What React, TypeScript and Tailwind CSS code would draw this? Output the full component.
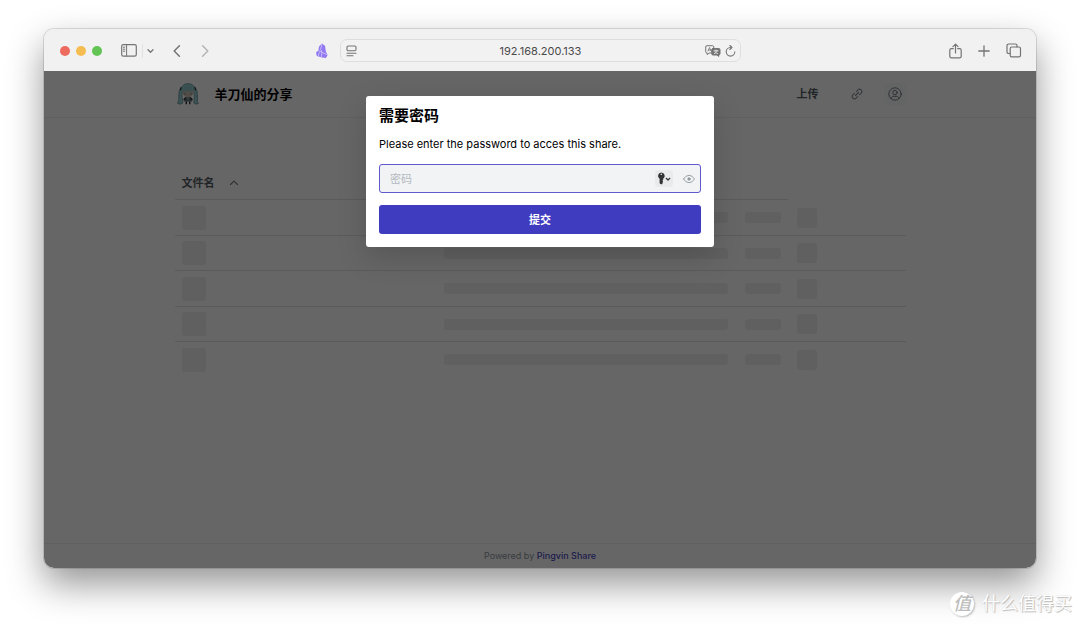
import type { ReactNode } from "react";

function Icon({
  className,
  box,
  width = 1.2,
  children,
}: {
  className: string;
  box: string;
  width?: number;
  children: ReactNode;
}) {
  return (
    <svg
      className={"shrink-0 " + className}
      viewBox={box}
      fill="none"
      stroke="currentColor"
      strokeWidth={width}
      strokeLinecap="round"
      strokeLinejoin="round"
      aria-hidden="true"
    >
      {children}
    </svg>
  );
}

function Toolbar() {
  return (
    <div className="grid h-[42px] shrink-0 grid-cols-[1fr_minmax(0,401px)_1fr] items-center bg-[#f1f1f1] pt-px text-[#747474]">
      <div className="flex items-center pl-4">
        <div className="flex gap-1.5">
          <span className="size-2.5 rounded-full bg-[#ed6a5e]" />
          <span className="size-2.5 rounded-full bg-[#f5bd4f]" />
          <span className="size-2.5 rounded-full bg-[#61c454]" />
        </div>
        <button type="button" aria-label="Sidebar" className="ml-[19px]">
          <Icon className="h-[13px] w-4" box="0 0 16 13">
            <rect x="0.7" y="0.7" width="14.6" height="11.4" rx="1.6" />
            <path d="M5.6 .7v11.4M2.4 3.2h1.4M2.4 5.2h1.4M2.4 7.2h1.4" strokeWidth="1" />
          </Icon>
        </button>
        <span className="ml-[5px] h-3.5 w-px bg-[#e2e2e2]" />
        <button type="button" aria-label="Tab groups" className="ml-1">
          <Icon className="h-2 w-[7px]" box="0 0 7 8" width={1.3}>
            <path d="M1 2.800l2.500 2.500L6 2.800" />
          </Icon>
        </button>
        <button type="button" aria-label="Back" className="ml-[19px]">
          <Icon className="h-3 w-2" box="0 0 8 12" width={1.5}>
            <path d="M6.400 .8L1.200 6l5.200 5.200" />
          </Icon>
        </button>
        <button type="button" aria-label="Forward" className="ml-5 text-[#b4b4b4]">
          <Icon className="h-3 w-2" box="0 0 8 12" width={1.5}>
            <path d="M1.600 .8L6.800 6l-5.200 5.200" />
          </Icon>
        </button>
        <button type="button" aria-label="Web clipper" className="mr-3 ml-auto">
          <svg className="h-4 w-3" viewBox="0 0 12 16" aria-hidden="true">
            <path d="M5.900.5 9 2.700l.9 5.800L11.600 12 10 15l-4-.6L.8 13 0 9.600 2.400 7.400 3 3.400z" fill="#937af2" />
            <path d="M5.900.7 4.700 6.500 6 9.400 5.300 14.400M2.400 7.600 6 9.400l5.300 2.300M2.200 13.300 3.400 9.200" fill="none" stroke="#d3c8fb" strokeWidth=".8" />
          </svg>
        </button>
      </div>
      <div className="flex h-[23px] items-center rounded-[7px] border border-[#dedede] bg-[#f2f2f2] pr-1 pl-[5px]">
        <Icon className="h-3 w-[11px]" box="0 0 11 12" width={1.1}>
          <rect x="1" y="1" width="9" height="4.8" rx="1.2" />
          <path d="M1 8.200h9M1 10.800h6" />
        </Icon>
        <span className="flex-1 pl-5 text-center text-[11px] leading-4 text-[#4a4a4a]">192.168.200.133</span>
        <button type="button" aria-label="Translate">
          <Icon className="h-3 w-4" box="0 0 16 12" width={1}>
            <path d="M6.300 8H4L2.200 9.600V8H2A1.300 1.300 0 0 1 .7 6.700V2A1.300 1.300 0 0 1 2 .7h5.500A1.300 1.300 0 0 1 8.800 2v1" />
            <path d="M3 6l1.500-3.500L6 6M3.500 5h2" strokeWidth=".8" />
            <path d="M8 3.500h5.700A1.300 1.300 0 0 1 15 4.800v3.900A1.300 1.300 0 0 1 13.700 10v1.500L12 10H8a1.300 1.300 0 0 1-1.300-1.300V4.800A1.300 1.300 0 0 1 8 3.500z" fill="currentColor" />
            <path d="M9 5.800h4M11 4.900v.9M9.300 8.600c1.600-.5 2.400-1.500 2.700-2.800M9.900 6.600c.6 1 1.500 1.600 2.700 2" stroke="#f1f1f1" strokeWidth=".8" />
          </Icon>
        </button>
        <button type="button" aria-label="Reload" className="ml-1">
          <Icon className="h-3 w-[11px]" box="0 0 11 12" width={1.1}>
            <path d="M5.400 2.500A4.300 4.300 0 1 0 9.800 6.800M4.900.5l2.100 2-2.100 2" />
          </Icon>
        </button>
      </div>
      <div className="flex items-center justify-end gap-4 pr-3.5">
        <button type="button" aria-label="Share">
          <Icon className="h-4 w-[13px]" box="0 0 13 16">
            <path d="M4.300 5.700H2.400A1.600 1.600 0 0 0 .8 7.300v5.900a1.600 1.600 0 0 0 1.600 1.600h8.200a1.600 1.600 0 0 0 1.600-1.600V7.300a1.600 1.600 0 0 0-1.600-1.600H8.700M6.500 10V1.200M3.900 3.600l2.600-2.500 2.600 2.500" />
          </Icon>
        </button>
        <button type="button" aria-label="New tab">
          <Icon className="h-3 w-3" box="0 0 12 12" width={1.3}>
            <path d="M6 .8v10.400M.8 6h10.400" />
          </Icon>
        </button>
        <button type="button" aria-label="Show tabs">
          <Icon className="h-[15px] w-4" box="0 0 16 15">
            <path d="M4 10.500H2.600A1.600 1.600 0 0 1 1 8.900V2.600A1.600 1.600 0 0 1 2.600 1h6.800A1.600 1.600 0 0 1 11 2.600V4" />
            <rect x="4.200" y="4" width="10.300" height="9.800" rx="1.600" />
          </Icon>
        </button>
      </div>
    </div>
  );
}

function Mascot() {
  return (
    <svg className="size-[22px] shrink-0" viewBox="0 0 22 22" aria-hidden="true">
      <path d="M4.500 4Q7 .4 11 .5T18 4.200Q21 8 20.500 14t1 6.500Q19 22 16.800 20 18 12 16.500 7H5.500Q4.500 12 5.800 20 3.500 22 .7 20.600 2 17 1.800 12T4.500 4z" fill="#94cdd2" stroke="#66898d" strokeWidth=".7" />
      <path d="M6 6.500h10.200v4.800Q14 14.500 11 14.500T6 11.300z" fill="#cfc0b2" />
      <path d="M5.300 8.800Q5 3 11 2.600q6 .2 5.800 6.300l-1.600-1.800-.7 2.600L12.800 7l-2 2.800L9.600 7 7.800 9.800l-.7-2z" fill="#8fc6cb" />
      <path d="M7.900 10.300v1.200M13.900 10.300v1.200" stroke="#4b6d74" strokeWidth="1" />
      <path d="M8.500 14.200h5l1.700 4.300H7z" fill="#5c696d" />
      <path d="M8.500 14.500l-1.800 2.700M13.500 14.500l1.900 2.700M9.300 18.500v2.700M12.800 18.500v2.700" stroke="#222" strokeWidth="1.300" />
      <path d="M11 14.500v2.800" stroke="#98e2e5" strokeWidth=".8" />
      <path d="M4.300 4.300l-1 3M17.700 4.300l1.100 3" stroke="#303035" strokeWidth="1.300" />
    </svg>
  );
}

function SiteHeader() {
  return (
    <header className="h-[47px] shrink-0 border-b border-[#efefef]">
      <div className="mx-auto flex h-full w-full max-w-[731px] items-center">
        <a href="#home" className="flex items-center gap-4 pl-0.5">
          <Mascot />
          <span className="text-[13px] leading-5 font-bold text-black">羊刀仙的分享</span>
        </a>
        <nav className="ml-auto flex items-center">
          <a href="#upload" className="text-[11px] leading-4 font-bold text-[#565c63]">上传</a>
          <button type="button" aria-label="Links" className="ml-8 text-[#868e96]">
            <Icon className="size-3" box="0 0 12 12" width={1.1}>
              <path d="M4.500 7.500l3-3M5.500 3.500l1.400-1.600a2.300 2.300 0 0 1 3.300 3.200L8.600 6.600M6.500 8.500l-1.400 1.600a2.300 2.300 0 0 1-3.300-3.200l1.600-1.500" />
            </Icon>
          </button>
          <button
            type="button"
            aria-label="Account"
            className="ml-[21px] flex size-[22px] items-center justify-center rounded-[3px] bg-[#f8fcfa] text-[#737c83]"
          >
            <Icon className="size-3.5" box="0 0 14 14" width={1}>
              <circle cx="7" cy="7" r="6.200" />
              <circle cx="7" cy="5.600" r="2.200" />
              <path d="M3 11.600c.4-1.700 1.500-2.300 2.700-2.300h2.600c1.200 0 2.300.6 2.700 2.300" />
            </Icon>
          </button>
        </nav>
      </div>
    </header>
  );
}

function FileTable() {
  return (
    <table className="mx-auto w-full max-w-[731px] table-fixed border-separate border-spacing-0">
      <colgroup>
        <col />
        <col className="w-[301px]" />
        <col className="w-[50px]" />
        <col className="w-[118px]" />
      </colgroup>
      <thead>
        <tr className="h-[34px]">
          <th scope="col" className="border-b border-[#e3e3e3] px-[7px] text-left">
            <button type="button" className="flex items-center gap-3.5 text-[11px] leading-4 font-bold text-[#565c63]">
              文件名
              <Icon className="h-2 w-2.5 text-[#70777e]" box="0 0 10 8" width={1.1}>
                <path d="M1.500 5.500L5 2.200l3.500 3.300" />
              </Icon>
            </button>
          </th>
          <td className="border-b border-[#e3e3e3]" />
          <td className="border-b border-[#e3e3e3]" />
          <td />
        </tr>
      </thead>
      <tbody>
        {[0, 1, 2, 3, 4].map((row) => (
          <tr
            key={row}
            className="odd:h-9 even:h-[35px] *:border-b *:border-[#e3e3e3] last:*:border-transparent"
          >
            <td className="px-[7px]">
              <div className="size-6 rounded-[3px] bg-[#efefef]" />
            </td>
            <td className="pr-2.5 pl-[7px]">
              <div className="h-[11px] rounded-[3px] bg-[#efefef]" />
            </td>
            <td className="px-[7px]">
              <div className="h-[11px] rounded-[3px] bg-[#efefef]" />
            </td>
            <td className="px-[9px]">
              <div className="size-5 rounded-[3px] bg-[#efefef]" />
            </td>
          </tr>
        ))}
      </tbody>
    </table>
  );
}

function PasswordDialog() {
  return (
    <form
      role="dialog"
      aria-labelledby="dialog-title"
      onSubmit={(event) => event.preventDefault()}
      className="w-full max-w-[348px] rounded-[3px] bg-white p-[13px] shadow-[0_10px_30px_rgba(0,0,0,0.16)]"
    >
      <h2 id="dialog-title" className="text-[15px] leading-[14px] font-bold text-black">需要密码</h2>
      <label htmlFor="password" className="mt-[13px] block text-[11px] leading-4 text-black">
        Please enter the password to acces this share.
      </label>
      <div className="mt-3 flex h-[29px] items-center rounded-[3px] border border-[#5f59cc] bg-[#f1f3f5] pr-[5px] pl-2.5">
        <input
          id="password"
          type="password"
          placeholder="密码"
          className="min-w-0 flex-1 bg-transparent text-[11px] leading-4 text-black outline-none placeholder:text-[#b4b9c0]"
        />
        <button
          type="button"
          aria-label="Fill password"
          className="flex h-[17px] w-[18px] items-center justify-center rounded-[4px] bg-[#e9eaec] text-[#333]"
        >
          <Icon className="h-[13px] w-3.5" box="0 0 14 13">
            <path
              fillRule="evenodd"
              clipRule="evenodd"
              d="M4.300 .4a3.500 3.500 0 0 1 1.900 6.400v1l-.8.9.8 1-.7.9.1 1-1.300 1-1.700-1.300V6.800A3.500 3.500 0 0 1 4.300 .4zM4.300 1.400a.8.8 0 1 0 0 1.600.8.8 0 0 0 0-1.600z"
              fill="currentColor"
              stroke="none"
            />
            <path d="M9.200 6.300L11 8l1.800-1.700" />
          </Icon>
        </button>
        <button type="button" aria-label="Show password" className="ml-2.5 text-[#90979e]">
          <Icon className="h-2.5 w-3" box="0 0 12 10" width={0.9}>
            <path d="M.5 5Q2.700 1.300 6 1.300T11.500 5Q9.300 8.700 6 8.700T.5 5z" />
            <circle cx="6" cy="5" r="1.200" fill="currentColor" />
          </Icon>
        </button>
      </div>
      <button
        type="submit"
        className="mt-3 h-[29px] w-full rounded-[3px] bg-[#403cc0] text-[11px] leading-4 font-bold text-white"
      >
        提交
      </button>
    </form>
  );
}

export default function App() {
  return (
    <div className="relative flex min-h-screen flex-col bg-white px-11 pt-[29px] pb-[58px] font-[Inter,'Noto_Sans_CJK_SC',sans-serif]">
      <div className="flex flex-1 flex-col overflow-hidden rounded-[10px] shadow-[0_0_0_1px_rgba(0,0,0,0.12),0_16px_36px_rgba(0,0,0,0.42)]">
        <Toolbar />
        <div className="relative flex flex-1 flex-col bg-white">
          <SiteHeader />
          <main className="flex-1 pt-12">
            <FileTable />
          </main>
          <footer className="h-[25px] shrink-0 border-t border-[#ededed] text-center text-[9px] leading-6 text-[#90979e]">
            Powered by{" "}
            <a href="#pingvin" className="font-medium text-[#4f4abf]">Pingvin Share</a>
          </footer>
          <div className="absolute inset-0 flex items-start justify-center bg-black/60 pt-[25px]">
            <PasswordDialog />
          </div>
        </div>
      </div>
      <div className="absolute right-2 bottom-2.5 flex items-center gap-2 text-white [text-shadow:1px_1px_1px_#bbb,0_0_1px_#ccc]">
        <span className="flex size-6 items-center justify-center rounded-full bg-white text-[18px] leading-6 font-medium text-[#bdbdbd] italic shadow-[1px_1px_2px_#bbb] [text-shadow:none]">
          值
        </span>
        <span className="text-[18px] leading-6">什么值得买</span>
      </div>
    </div>
  );
}
